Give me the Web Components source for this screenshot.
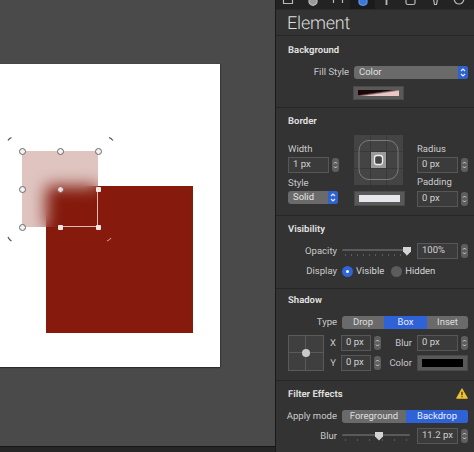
<!DOCTYPE html>
<html>
<head>
<meta charset="utf-8">
<style>
  html, body { margin: 0; height: 100%; background: #2b2b2b; overflow: hidden; }
  body { font-family: Roboto, "Liberation Sans", sans-serif; text-rendering: geometricPrecision; }
  #app { display: flex; width: 474px; height: 452px; }
</style>
</head>
<body>
<div id="app">
  <design-canvas></design-canvas>
  <inspector-panel>
    <panel-toolbar></panel-toolbar>
    <panel-title>Element</panel-title>

    <panel-section heading="Background" height="72" pad="9">
      <panel-row label="Fill Style" label-width="76" top="1">
        <select-box value="Color" width="114"></select-box>
      </panel-row>
      <div style="margin:6px 0 0 65px"><color-well width="51" height="14" fill="linear-gradient(to bottom right,#1c0508 0 40%,#e6c9c6 60% 100%)"></color-well></div>
    </panel-section>

    <panel-section heading="Border" height="108" pad="8">
      <border-grid></border-grid>
    </panel-section>

    <panel-section heading="Visibility" height="73" pad="8">
      <panel-row label="Opacity" label-width="64" top="2">
        <slider-bar pos="65" width="68" ticks="11"></slider-bar>
        <number-field value="100%" style="margin-left:7px"></number-field>
      </panel-row>
      <panel-row label="Display" label-width="64" top="4">
        <radio-dot checked>Visible</radio-dot>
        <radio-dot>Hidden</radio-dot>
      </panel-row>
    </panel-section>

    <panel-section heading="Shadow" height="92" pad="6">
      <panel-row label="Type" label-width="64" top="2">
        <seg-control items="Drop,Box,Inset" active="1" widths="42,43,41"></seg-control>
      </panel-row>
      <shadow-grid></shadow-grid>
    </panel-section>

    <panel-section heading="Filter Effects" height="71" pad="8" warn last>
      <panel-row label="Apply mode" label-width="64" top="5">
        <seg-control items="Foreground,Backdrop" active="1" widths="64,62"></seg-control>
      </panel-row>
      <panel-row label="Blur" label-width="64" top="4">
        <slider-bar pos="37" width="68" ticks="6"></slider-bar>
        <number-field value="11.2 px" style="margin-left:7px"></number-field>
      </panel-row>
    </panel-section>
  </inspector-panel>
</div>

<script>
class DesignCanvas extends HTMLElement {
    constructor() {
        super();
        this.attachShadow({ mode: 'open' });
        const spots = [
            [22, 151, 0], [60, 151, 0], [98, 151, 0],
            [22, 189, 0], [60, 189, 2], [98, 189, 1],
            [22, 227, 0], [60, 227, 1], [98, 227, 1]
        ];
        const handles = spots.map(([x, y, kind]) =>
            `<i class="h k${kind}" style="left:${x}px;top:${y}px"></i>`).join('');
        this.shadowRoot.innerHTML = `
            <style>
                :host { display: block; position: relative; flex: none; width: 275px; height: 452px; background: #4a4a4a; overflow: hidden; }
                .bottom { position: absolute; left: 0; right: 0; top: 446px; height: 6px; background: #262626; border-top: 1px solid #161616; box-sizing: border-box; }
                .page { position: absolute; left: 0; top: 64px; width: 220px; height: 303px; background: #fff; box-shadow: 0 1px 1px #2c2c2c, 1px 0 1px #3a3a3a; }
                .red { position: absolute; left: 46px; top: 186px; width: 147px; height: 147px; background: #851a0d; }
                .glass { position: absolute; left: 22px; top: 151px; width: 76px; height: 76px; background: rgba(133, 26, 13, .26); -webkit-backdrop-filter: blur(8px); backdrop-filter: blur(8px); }
                .edge { position: absolute; left: 60px; top: 189px; width: 38px; height: 38px; box-sizing: border-box; border-right: 1px solid #dfbab4; border-bottom: 1px solid #dfbab4; }
                .h { position: absolute; box-sizing: border-box; width: 7px; height: 7px; margin: -3.5px 0 0 -3.5px; background: #f2f2f2; border: 1px solid #666; border-radius: 50%; }
                .k1 { border-radius: 1px; width: 5px; height: 5px; margin: -2.5px 0 0 -2.5px; border: 0; background: #f4e8e6; }
                .k2 { background: #eddcd8; border-color: #8a5a55; }
                svg { position: absolute; left: 0; top: 0; }
            </style>
            <div class="page"></div>
            <div class="red"></div>
            <div class="glass"></div>
            <div class="edge"></div>
            <svg width="275" height="452" fill="none" stroke="#555" stroke-width="1.2">
                <path d="M8 140.500Q9 138.500 11.500 137.500"/>
                <path d="M109 137.500Q111.500 138.500 113 140.500"/>
                <path d="M8 237Q9 239.500 11.500 241"/>
                <path d="M107 241Q109.500 240 111 238" stroke="#c79a92"/>
            </svg>
            ${handles}
            <div class="bottom"></div>
        `;
    }
}

class InspectorPanel extends HTMLElement {
    constructor() {
        super();
        this.attachShadow({ mode: 'open' });
        this.shadowRoot.innerHTML = `
            <style>
                :host { display: flex; flex-direction: column; flex: none; box-sizing: border-box; width: 199px; height: 452px; background: #333; border-left: 1px solid #1a1a1a; color: #d6d6d6; font-size: 9.5px; overflow: hidden; }
            </style>
            <slot></slot>
        `;
    }
}

class PanelToolbar extends HTMLElement {
    constructor() {
        super();
        this.attachShadow({ mode: 'open' });
        this.shadowRoot.innerHTML = `
            <style>
                :host { display: block; flex: none; height: 9px; background: #232323; }
                svg { display: block; }
            </style>
            <svg width="198" height="9" fill="none" stroke="#b9b9b9" stroke-width="1.2">
                <rect x="74" y="0" width="25" height="9" fill="#1b1b1b" stroke="none"/>
                <path d="M7.500 -2V3.500H16.500V-2"/>
                <path d="M33 -1V2Q33 4 37 5.500Q41 4 41 2V-1" fill="#999"/>
                <path d="M57.500 0V3M66.500 0V3"/>
                <path d="M83 -1V2.500Q83 4.500 87 5.500Q91 4.500 91 2.500V-1Z" fill="#3a78d8" stroke="#5b93e6"/>
                <path d="M110.500 0V5" stroke-width="1.800"/>
                <path d="M130 -1V3Q130 4.500 132 4.500H137Q139 4.500 139 3V-1"/>
                <path d="M157.500 -1L158.500 4.500H160.500L161.500 -1"/>
                <path d="M178 -1Q179 4 183 4Q187 4 188 -1"/>
            </svg>
        `;
    }
}

class PanelTitle extends HTMLElement {
    constructor() {
        super();
        this.attachShadow({ mode: 'open' });
        this.shadowRoot.innerHTML = `
            <style>
                :host { display: block; flex: none; box-sizing: border-box; height: 27px; padding: 2px 0 0 11px; border-top: 1px solid #2a2a2a; border-bottom: 1px solid #262626; font-size: 18px; font-weight: 300; line-height: 23px; color: #dedede; letter-spacing: -.2px; }
            </style>
            <slot></slot>
        `;
    }
}

class PanelSection extends HTMLElement {
    constructor() {
        super();
        this.attachShadow({ mode: 'open' });
    }
    connectedCallback() {
        const warn = this.hasAttribute('warn') ? `
            <svg class="warn" width="12" height="11" viewBox="0 0 13 12">
                <path d="M6.500 .800L12.400 11.200H.600Z" fill="#f0c22e" stroke="#f0c22e" stroke-linejoin="round"/>
                <path d="M6.500 4V8M6.500 9V10.200" stroke="#222" stroke-width="1.300"/>
            </svg>` : '';
        this.shadowRoot.innerHTML = `
            <style>
                :host { display: block; flex: none; box-sizing: border-box; height: ${this.getAttribute('height')}px; padding: ${this.getAttribute('pad')}px 0 0 12px; position: relative; border-bottom: ${this.hasAttribute('last') ? '0' : '1px solid #262626'}; }
                h3 { margin: 0 0 7px; font-size: 9.5px; line-height: 12px; font-weight: 700; color: #dcdcdc; }
                .warn { position: absolute; right: 6px; top: 7px; }
            </style>
            <h3>${this.getAttribute('heading')}</h3>
            ${warn}
            <slot></slot>
        `;
    }
}

class PanelRow extends HTMLElement {
    constructor() {
        super();
        this.attachShadow({ mode: 'open' });
    }
    connectedCallback() {
        this.shadowRoot.innerHTML = `
            <style>
                :host { display: flex; align-items: center; height: 16px; margin-top: ${this.getAttribute('top') || 0}px; }
                label { flex: none; box-sizing: border-box; margin-left: -12px; padding-right: 5px; width: ${+this.getAttribute('label-width') + 2}px; text-align: right; color: #c9c9c9; white-space: nowrap; }
            </style>
            <label>${this.getAttribute('label')}</label>
            <slot></slot>
        `;
    }
}

class SelectBox extends HTMLElement {
    constructor() {
        super();
        this.attachShadow({ mode: 'open' });
    }
    connectedCallback() {
        this.shadowRoot.innerHTML = `
            <style>
                :host { display: flex; align-items: center; box-sizing: border-box; flex: none; width: ${this.getAttribute('width')}px; height: 13px; background: #6a6a6a; border-radius: 3px; overflow: hidden; color: #e2e2e2; padding-left: 5px; font-size: 9.5px; }
                span { flex: 1; }
                b { width: 10px; height: 13px; background: #2d62cf; display: block; }
                svg { display: block; }
            </style>
            <span>${this.getAttribute('value')}</span>
            <b><svg width="10" height="13" fill="none" stroke="#e6eeff" stroke-width="1.200"><path d="M3 5L5 3L7 5M3 8L5 10L7 8"/></svg></b>
        `;
    }
}

class ColorWell extends HTMLElement {
    constructor() {
        super();
        this.attachShadow({ mode: 'open' });
    }
    connectedCallback() {
        this.shadowRoot.innerHTML = `
            <style>
                :host { display: block; box-sizing: border-box; width: ${this.getAttribute('width')}px; height: ${this.getAttribute('height')}px; padding: 3px 4px; background: #595959; border: 1px solid #4a4a4a; }
                div { height: 100%; background: ${this.getAttribute('fill')}; }
            </style>
            <div></div>
        `;
    }
}

class NumberField extends HTMLElement {
    constructor() {
        super();
        this.attachShadow({ mode: 'open' });
    }
    connectedCallback() {
        const w = this.getAttribute('width') || 41;
        this.shadowRoot.innerHTML = `
            <style>
                :host { display: inline-flex; align-items: center; flex: none; gap: 3px; }
                .f { box-sizing: border-box; width: ${w}px; height: 16px; line-height: 14px; padding-left: 4px; border: 1px solid #575757; background: #3b3b3b; color: #d2d2d2; font-size: 9.5px; white-space: nowrap; }
                .s { width: 7px; height: 14px; background: #5e5e5e; border-radius: 3px; }
                svg { display: block; }
            </style>
            <div class="f">${this.getAttribute('value')}</div>
            <div class="s"><svg width="7" height="14" fill="none" stroke="#d8d8d8"><path d="M2 5.500L3.500 4L5 5.500M2 8.500L3.500 10L5 8.500"/></svg></div>
        `;
    }
}

class SliderBar extends HTMLElement {
    constructor() {
        super();
        this.attachShadow({ mode: 'open' });
    }
    connectedCallback() {
        const ticks = Array.from({ length: +this.getAttribute('ticks') }, () => '<i></i>').join('');
        this.shadowRoot.innerHTML = `
            <style>
                :host { display: block; position: relative; flex: none; width: ${this.getAttribute('width')}px; height: 16px; }
                .track { position: absolute; left: 0; right: 0; top: 6px; height: 2px; background: #5a5a5a; border-radius: 1px; }
                .ticks { position: absolute; left: 3px; right: 3px; top: 11px; display: flex; justify-content: space-between; }
                i { width: 1px; height: 2px; background: #5a5a5a; }
                svg { position: absolute; top: 3px; left: ${this.getAttribute('pos') - 4}px; }
            </style>
            <div class="track"></div>
            <div class="ticks">${ticks}</div>
            <svg width="8" height="10"><path d="M0 1H8V5.500L4 9.500L0 5.500Z" fill="#d4d4d4"/></svg>
        `;
    }
}

class RadioDot extends HTMLElement {
    constructor() {
        super();
        this.attachShadow({ mode: 'open' });
    }
    connectedCallback() {
        const on = this.hasAttribute('checked');
        this.shadowRoot.innerHTML = `
            <style>
                :host { display: inline-flex; align-items: center; gap: 3px; margin-right: 7px; color: #d2d2d2; }
                b { width: 11px; height: 11px; border-radius: 50%; background: ${on ? '#2f66d8' : '#5c5c5c'}; display: flex; align-items: center; justify-content: center; }
                b::after { content: ""; width: 3px; height: 3px; border-radius: 50%; background: ${on ? '#fff' : 'transparent'}; }
            </style>
            <b></b><slot></slot>
        `;
    }
}

class SegControl extends HTMLElement {
    constructor() {
        super();
        this.attachShadow({ mode: 'open' });
    }
    connectedCallback() {
        const widths = this.getAttribute('widths').split(',');
        const active = +this.getAttribute('active');
        const cells = this.getAttribute('items').split(',').map((t, i) =>
            `<span class="${i === active ? 'on' : ''}" style="width:${widths[i]}px">${t}</span>`).join('');
        this.shadowRoot.innerHTML = `
            <style>
                :host { display: flex; flex: none; height: 13px; background: #6a6a6a; border-radius: 3px; overflow: hidden; color: #dedede; font-size: 9.5px; line-height: 13px; }
                span { display: block; text-align: center; }
                .on { background: #2f62d6; color: #e8eefc; }
            </style>
            ${cells}
        `;
    }
}

class BorderGrid extends HTMLElement {
    constructor() {
        super();
        this.attachShadow({ mode: 'open' });
        this.shadowRoot.innerHTML = `
            <style>
                :host { display: grid; grid-template-columns: 52px 49px 51px; column-gap: 14px; margin-top: 3px; }
                .col { display: flex; flex-direction: column; }
                label { display: block; height: 14px; line-height: 14px; color: #c9c9c9; }
                .a { margin-top: 8px; }
                .b { margin-top: 4px; }
                .c { margin-top: 3px; margin-bottom: 1px; }
                .dia { display: block; margin-bottom: 6px; }
            </style>
            <div class="col">
                <label class="a">Width</label>
                <number-field value="1 px"></number-field>
                <label class="b">Style</label>
                <select-box value="Solid" width="50"></select-box>
            </div>
            <div class="col">
                <svg class="dia" width="49" height="50">
                    <rect width="49" height="50" fill="#444"/>
                    <path d="M16.500 0V50M32.500 0V50M0 16.500H49M0 33.500H49" stroke="#393939"/>
                    <rect x="5" y="5.500" width="39" height="39" rx="10" fill="none" stroke="#7c7c7c"/>
                    <rect x="17" y="17" width="15" height="16" fill="#9a9a9a"/>
                    <rect x="20.500" y="20.500" width="8" height="9" rx="2.500" fill="#444" stroke="#eee" stroke-width="1.300"/>
                </svg>
                <color-well width="51" height="15" fill="#e4e6ea"></color-well>
            </div>
            <div class="col">
                <label class="a">Radius</label>
                <number-field value="0 px"></number-field>
                <label class="c">Padding</label>
                <number-field value="0 px"></number-field>
            </div>
        `;
    }
}

class ShadowGrid extends HTMLElement {
    constructor() {
        super();
        this.attachShadow({ mode: 'open' });
        this.shadowRoot.innerHTML = `
            <style>
                :host { display: grid; grid-template-columns: 36px 17px 40px 36px auto; grid-auto-rows: 16px; row-gap: 4px; align-items: center; margin-top: 5px; position: relative; }
                svg { grid-row: 1 / 3; align-self: start; display: block; }
                label { text-align: right; padding-right: 5px; color: #c9c9c9; }
            </style>
            <svg width="36" height="36">
                <rect x=".5" y=".5" width="35" height="35" fill="#3f3f3f" stroke="#5a5a5a"/>
                <path d="M17.500 0V36M0 17.500H36" stroke="#5a5a5a"/>
                <circle cx="18" cy="18" r="4" fill="#c9c9c9"/>
            </svg>
            <label>X</label>
            <number-field value="0 px" width="31"></number-field>
            <label>Blur</label>
            <number-field value="0 px"></number-field>
            <label>Y</label>
            <number-field value="0 px" width="31"></number-field>
            <label>Color</label>
            <color-well width="51" height="16" fill="#000"></color-well>
        `;
    }
}

// Register the custom elements
customElements.define('design-canvas', DesignCanvas);
customElements.define('inspector-panel', InspectorPanel);
customElements.define('panel-toolbar', PanelToolbar);
customElements.define('panel-title', PanelTitle);
customElements.define('panel-section', PanelSection);
customElements.define('panel-row', PanelRow);
customElements.define('select-box', SelectBox);
customElements.define('color-well', ColorWell);
customElements.define('number-field', NumberField);
customElements.define('slider-bar', SliderBar);
customElements.define('radio-dot', RadioDot);
customElements.define('seg-control', SegControl);
customElements.define('border-grid', BorderGrid);
customElements.define('shadow-grid', ShadowGrid);
</script>
</body>
</html>
